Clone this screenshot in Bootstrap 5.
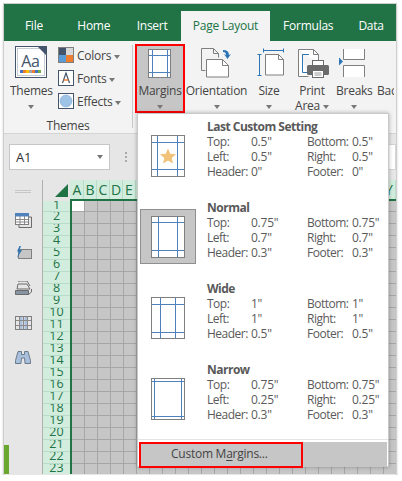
<!DOCTYPE html>
<html lang="en">
<head>
<meta charset="utf-8">
<title>Page Layout - Margins</title>
<link href="https://cdn.jsdelivr.net/npm/bootstrap@5.3.0/dist/css/bootstrap.min.css" rel="stylesheet">
<style>
html,body{background:#fff;margin:0;padding:0;overflow:hidden}
body,.xl-win{font-family:"Open Sans","Noto Sans",sans-serif;font-size:12px;line-height:16px;color:#444}
.xl-win{width:394px;height:472px;margin:3px 0 0 3px;border:1px solid #cfcfcf;border-bottom:0;position:relative;overflow:hidden;background:#e6e6e6;box-shadow:0 2px 2px #ccc;letter-spacing:-.25px}
.xl-fix{flex:none}
.xl-tabs{height:37px;background:#217346}
.xl-tab{color:#fff;font-size:12px;text-align:center;padding-top:14px}
.xl-tab.on{background:#f3f3f3;color:#217346;margin-top:7px;padding-top:7px}
.xl-ribbon{height:93px;background:#f3f3f3;border-bottom:1px solid #d4d4d4}
.xl-group{width:128px;flex:none}
.xl-sep{width:1px;height:83px;margin-top:4px;background:#c9c9c9;flex:none}
.xl-big{height:69px;margin-top:3px;border:2px solid transparent;text-align:center;flex:none;white-space:nowrap;line-height:15px}
.xl-big svg{display:block;margin:0 0 1px}
.xl-big.hit{border-color:#f00;background:#c6c6c6}
.xl-small{height:23px;white-space:nowrap}
.xl-small svg{margin-right:3px;flex:none}
.xl-small span{margin-top:1px}
.xl-small span span{margin:0}
.xl-cr{display:inline-block;width:0;height:0;border:3.5px solid transparent;border-top:4px solid #777;border-bottom:0;vertical-align:middle}
.xl-glabel{text-align:center;margin-top:2px;color:#444}
.xl-fbar{height:46px;padding-top:10px}
.xl-name{width:101px;height:26px;background:#fff;border:1px solid #c6c6c6;padding:0 6px;font-size:13px;color:#333;margin-left:5px}
.xl-dots{width:32px;gap:2px;padding-top:8px}
.xl-dots i{display:block;width:2px;height:2px;background:#aaa}
.xl-input{height:26px;background:#fff;border:1px solid #d4d4d4}
.xl-sheet{height:294px}
.xl-side{width:39px;border-right:1px solid #b0b0b0;flex:none}
.xl-side svg{display:block;margin:0 auto}
.xl-status{width:5px;height:29px;background:#6aa72e;margin-top:auto}
.xl-corner{width:28px;height:21px;flex:none;padding:4px 3px 0 12px}
.xl-cols{height:21px;background:#d2ecdd;border-bottom:2px solid #217346;margin-left:-1px;overflow:hidden;padding-left:1px}
.xl-cols span{width:13px;flex:none;text-align:center;color:#217346;font-size:14px;line-height:19px;letter-spacing:0;border-right:1px solid #b9dcc8;overflow:hidden}
.xl-rows{width:29px;flex:none;background:#d2ecdd;border-right:2px solid #217346;overflow:hidden}
.xl-rows div{height:12px;line-height:8px;font-size:12.5px;letter-spacing:0;text-align:center;color:#217346;border-bottom:1px solid #b9dcc8;overflow:hidden}
.xl-rows div:first-child{height:11px}
.xl-grid{background-color:#c6c6c6;background-image:repeating-linear-gradient(90deg,transparent 0 12px,#a6a6a6 12px 13px),repeating-linear-gradient(180deg,transparent 0 11px,#a6a6a6 11px 12px);background-position:0 -1px}
.xl-a1{width:12px;height:10px;background:#fff}
.xl-menu{position:absolute;left:133px;top:109px;width:252px;height:354px;background:#fff;border:1px solid #c9c9c9;box-shadow:0 0 4px rgba(0,0,0,.3);color:#5a5a5a;line-height:15px;font-size:12px}
.xl-sec{height:81px}
.xl-thumb{width:56px;height:55px;margin:14px 0 0 2px;flex:none}
.xl-thumb.sel{background:#c6c6c6;border:1px solid #8f8f8f}
.xl-info{margin:5px 0 0 11px}
.xl-ttl{font-weight:700;color:#595959;letter-spacing:-.5px}
.xl-tbl{display:grid;grid-template-columns:44px 56px 45px auto;white-space:nowrap}
.xl-tbl span:nth-child(odd){letter-spacing:-.5px}
.xl-foot{border-top:1px solid #e4e4e4;margin:1px 0 0;padding:2px 1px 0;height:29px}
.xl-custom{background:#c6c6c6;height:25px}
.xl-hit2{width:164px;height:26px;border:2px solid #f00;padding:2px 0 0 30px;color:#444}
.xl-hit2 u{text-underline-offset:2px}
</style>
</head>
<body>
<div class="xl-win">
  <div class="xl-tabs d-flex">
    <div class="xl-tab" style="width:60px">File</div>
    <div class="xl-tab" style="width:60px">Home</div>
    <div class="xl-tab" style="width:57px">Insert</div>
    <div class="xl-tab on" style="width:90px">Page Layout</div>
    <div class="xl-tab" style="width:76px">Formulas</div>
    <div class="xl-tab" style="width:50px">Data</div>
  </div>

  <div class="xl-ribbon d-flex overflow-hidden">
    <div class="xl-group">
      <div class="d-flex">
        <div class="xl-big ms-1" style="width:46px">
          <svg width="42" height="36" viewBox="0 0 42 36">
            <rect x="5.500" y=".5" width="31" height="31" fill="#fff" stroke="#44546a"/>
            <rect x="7.500" y="2.500" width="27" height="27" fill="#fff" stroke="#c6ccd4"/>
            <path d="M28 1h8v8z" fill="#44546a"/>
            <text x="20.500" y="21" text-anchor="middle" font-family="Open Sans" font-size="16" fill="#44546a">Aa</text>
            <g><rect x="10" y="24" width="3" height="3" fill="#4472c4"/><rect x="13" y="24" width="3" height="3" fill="#ed7d31"/><rect x="16" y="24" width="3" height="3" fill="#ffc000"/><rect x="19" y="24" width="3" height="3" fill="#a5a5a5"/><rect x="22" y="24" width="3" height="3" fill="#ed7d31"/><rect x="25" y="24" width="3" height="3" fill="#4472c4"/><rect x="28" y="24" width="3" height="3" fill="#70ad47"/></g>
          </svg>
          <div>Themes</div>
          <div><span class="xl-cr"></span></div>
        </div>
        <div class="ms-1" style="margin-top:6px">
          <div class="xl-small d-flex align-items-start">
            <svg width="16" height="16" viewBox="0 0 16 16"><rect x="0" y="0" width="8" height="8" fill="#44546a"/><rect x="8" y="0" width="8" height="8" fill="#d9d9d9"/><rect x="0" y="8" width="8" height="8" fill="#5b9bd5"/><rect x="8" y="8" width="8" height="8" fill="#ed7d31"/><rect x=".5" y=".5" width="15" height="15" fill="none" stroke="#7f7f7f"/></svg>
            <span>Colors <span class="xl-cr"></span></span>
          </div>
          <div class="xl-small d-flex align-items-start">
            <svg width="16" height="16" viewBox="0 0 16 16"><rect x=".5" y=".5" width="15" height="15" fill="#fff" stroke="#44546a"/><path d="M4.500 13 8 3l3.500 10" fill="none" stroke="#44546a" stroke-width="1.2"/><path d="M5.500 10h5" stroke="#ed7d31" stroke-width="1.4"/></svg>
            <span>Fonts <span class="xl-cr"></span></span>
          </div>
          <div class="xl-small d-flex align-items-start">
            <svg width="16" height="16" viewBox="0 0 16 16"><rect x=".5" y=".5" width="15" height="15" fill="#fff" stroke="#44546a"/><circle cx="8" cy="8" r="6" fill="#9dc3e6" stroke="#7ba7d0" stroke-width=".6"/></svg>
            <span>Effects <span class="xl-cr"></span></span>
          </div>
        </div>
      </div>
      <div class="xl-glabel">Themes</div>
    </div>
    <div class="xl-sep"></div>

    <div class="xl-big hit" style="width:50px;margin-left:2px">
      <svg width="46" height="36" viewBox="0 0 46 36">
        <rect x="11.500" y="3.500" width="22" height="28" fill="#fff" stroke="#7f7f7f"/>
        <path d="M15.500 4v27M30.500 4v27M12 9.500h21M12 26.500h21" stroke="#4f81bd" fill="none"/>
      </svg>
      <div style="margin:0 -2px">Margins</div>
      <div><span class="xl-cr"></span></div>
    </div>
    <div class="xl-big" style="width:63px">
      <svg width="59" height="36" viewBox="0 0 59 36">
        <path d="M14.500 2.500h12l5 5v4M14.500 2.500V24.500h4" fill="none" stroke="#7f7f7f"/>
        <path d="M19.500 13.500h16l6 6v11.500h-22z" fill="#fff" stroke="#7f7f7f"/>
        <path d="M35.500 13.500v6h6" fill="none" stroke="#7f7f7f"/>
        <path d="M26.500 2.500v5h5" fill="none" stroke="#7f7f7f"/>
        <path d="M36 4q6 0 6 5l2-1-3.500 5-3.500-5 2 1q0-3-3-3z" fill="#2e75b6"/>
      </svg>
      <div style="margin:0 -3px">Orientation</div>
      <div><span class="xl-cr"></span></div>
    </div>
    <div class="xl-big" style="width:42px">
      <svg width="38" height="36" viewBox="0 0 38 36">
        <path d="M15.500 8.500h13l5 5v15.500h-18z" fill="#fff" stroke="#7f7f7f"/>
        <path d="M28.500 8.500v5h5" fill="none" stroke="#7f7f7f"/>
        <path d="M13.500 4.500h20M13.500 2.500v4M33.500 2.500v4M9.500 8.500v21M7.500 8.500h4M7.500 29.500h4" stroke="#2e75b6" fill="none"/>
      </svg>
      <div>Size</div>
      <div><span class="xl-cr"></span></div>
    </div>
    <div class="xl-big" style="width:44px">
      <svg width="40" height="36" viewBox="0 0 40 36">
        <path d="M6.500 3.500h15l5 5v9M6.500 3.500V30.500h10" fill="#fff" stroke="#7f7f7f"/>
        <path d="M21.500 3.500v5h5" fill="none" stroke="#7f7f7f"/>
        <path d="M17 8.500H10.500V26.500h6" fill="none" stroke="#2e75b6"/>
        <rect x="20.500" y="14.500" width="11" height="6" fill="#fff" stroke="#6b6b6b"/>
        <rect x="15" y="19" width="22" height="10" rx="1.500" fill="#6b6b6b"/>
        <rect x="20.500" y="24.500" width="11" height="7" fill="#fff" stroke="#6b6b6b"/>
        <path d="M22.500 27h7M22.500 29h7" stroke="#9a9a9a"/>
      </svg>
      <div>Print</div>
      <div>Area <span class="xl-cr"></span></div>
    </div>
    <div class="xl-big" style="width:40px">
      <svg width="36" height="36" viewBox="0 0 36 36">
        <path d="M7.500 3v10.500h21V3" fill="#fff" stroke="#7f7f7f"/>
        <path d="M7.500 31v-11.500h21V31" fill="#fff" stroke="#7f7f7f"/>
        <path d="M3 11.500l4 4-4 4z" fill="#2e75b6"/>
      </svg>
      <div>Breaks</div>
      <div><span class="xl-cr"></span></div>
    </div>
    <div class="xl-big flex-grow-1 overflow-hidden text-start" style="flex:1 1 0;padding-left:1px">
      <svg width="20" height="36" viewBox="0 0 20 36"><path d="M18 3v26" stroke="#8a8a8a" stroke-width="2"/></svg>
      <div>Background</div>
    </div>
  </div>

  <div class="xl-fbar d-flex">
    <div class="xl-name d-flex align-items-center justify-content-between">
      <span>A1</span><span class="xl-cr"></span>
    </div>
    <div class="xl-dots d-flex flex-column align-items-center"><i></i><i></i><i></i></div>
    <div class="xl-input flex-grow-1"></div>
  </div>

  <div class="xl-sheet d-flex">
    <div class="xl-side d-flex flex-column">
      <svg width="16" height="3" viewBox="0 0 16 3" style="margin-top:10px"><path d="M0 .5h16M0 2.500h16" stroke="#c6c6c6"/></svg>
      <svg width="17" height="15" viewBox="0 0 17 15" style="margin-top:20px">
        <rect x=".5" y=".5" width="13" height="11" fill="#fff" stroke="#7f7f7f"/><rect x="0" y="0" width="14" height="3.500" fill="#4f81bd"/><path d="M5 3v8M9.500 3v8M1 6.500h12M1 9h12" stroke="#8a8a8a"/><path d="M14 4h2.500v10.500H4V12" fill="none" stroke="#6b6b6b"/>
      </svg>
      <svg width="18" height="14" viewBox="0 0 18 14" style="margin-top:18px">
        <rect x="4.500" y="3.500" width="13" height="9" fill="#c6c6c6" stroke="#7f7f7f"/><path d="M5.500 0 3 5.500h2L3 12l5-8H5.500L7 0z" fill="#2e75b6"/>
      </svg>
      <svg width="17" height="14" viewBox="0 0 17 14" style="margin-top:21px">
        <path d="M.5 9.500h13v4H.5z" fill="#8794a3" stroke="#6b6b6b"/><path d="M2 8l1-5h9l3 5z" fill="#e6e6e6" stroke="#6b6b6b"/><path d="M3.500 1l.5-1h8l3 5M13.500 13.500 16.500 11V8" fill="none" stroke="#6b6b6b"/>
      </svg>
      <svg width="17" height="14" viewBox="0 0 17 14" style="margin-top:21px">
        <rect x=".5" y=".5" width="16" height="13" fill="#e6e6e6" stroke="#7f7f7f"/><rect x="5" y="1" width="2.500" height="12" fill="#a9c0dc"/><rect x="9.500" y="1" width="2.500" height="12" fill="#a9c0dc"/><path d="M4.500 1v12M8.500 1v12M12.500 1v12M1 4.500h15M1 9.500h15" stroke="#8a8a8a"/>
      </svg>
      <svg width="16" height="13" viewBox="0 0 16 13" style="margin-top:21px">
        <path d="M3 .5h3.500v3h3v-3H13l2.500 9v3h-5.500L9.500 7h-3L6 12.500H.5v-3z" fill="#a9c0dc" stroke="#6b7b8c"/>
      </svg>
      <div class="xl-status"></div>
    </div>
    <div class="flex-grow-1 d-flex flex-column overflow-hidden">
      <div class="d-flex xl-fix">
        <div class="xl-corner">
          <svg width="13" height="13" viewBox="0 0 13 13" class="d-block"><path d="M13 0v13H0z" fill="#217346"/></svg>
        </div>
        <div class="xl-cols d-flex flex-grow-1">
          <span>A</span><span>B</span><span>C</span><span>D</span><span>E</span><span>F</span><span>G</span><span>H</span><span>I</span><span>J</span><span>K</span><span>L</span><span>M</span><span>N</span><span>O</span><span>P</span><span>Q</span><span>R</span><span>S</span><span>T</span><span>U</span><span>V</span><span>W</span><span>X</span><span>Y</span><span>Z</span>
        </div>
      </div>
      <div class="d-flex flex-grow-1 overflow-hidden">
        <div class="xl-rows">
          <div>1</div><div>2</div><div>3</div><div>4</div><div>5</div><div>6</div><div>7</div><div>8</div><div>9</div><div>10</div><div>11</div><div>12</div><div>13</div><div>14</div><div>15</div><div>16</div><div>17</div><div>18</div><div>19</div><div>20</div><div>21</div><div>22</div><div>23</div>
        </div>
        <div class="xl-grid flex-grow-1"><div class="xl-a1"></div></div>
      </div>
    </div>
  </div>

  <div class="xl-menu">
    <div class="xl-sec d-flex">
      <div class="xl-thumb d-flex align-items-center justify-content-center">
        <svg width="34" height="42" viewBox="0 0 34 42"><rect x=".5" y=".5" width="33" height="41" fill="#fff" stroke="#7f7f7f"/><path d="M6.500 1v40M26.500 1v40M1 7.500h32M1 34.500h32" stroke="#4f81bd" fill="none"/><path d="M17 13.500l2.300 5.300 5.700.5-4.300 3.700 1.300 5.500-5-3-5 3 1.300-5.500L9 19.300l5.700-.5z" fill="#f0c27a"/></svg>
      </div>
      <div class="xl-info">
        <div class="xl-ttl">Last Custom Setting</div>
        <div class="xl-tbl"><span>Top:</span><span>0.5"</span><span>Bottom:</span><span>0.5"</span><span>Left:</span><span>0.5"</span><span>Right:</span><span>0.5"</span><span>Header:</span><span>0"</span><span>Footer:</span><span>0"</span></div>
      </div>
    </div>
    <div class="xl-sec d-flex">
      <div class="xl-thumb sel d-flex align-items-center justify-content-center">
        <svg width="34" height="42" viewBox="0 0 34 42"><rect x=".5" y=".5" width="33" height="41" fill="#fff" stroke="#7f7f7f"/><path d="M7.500 1v40M26.500 1v40M1 6.500h32M1 34.500h32" stroke="#4f81bd" fill="none"/></svg>
      </div>
      <div class="xl-info">
        <div class="xl-ttl">Normal</div>
        <div class="xl-tbl"><span>Top:</span><span>0.75"</span><span>Bottom:</span><span>0.75"</span><span>Left:</span><span>0.7"</span><span>Right:</span><span>0.7"</span><span>Header:</span><span>0.3"</span><span>Footer:</span><span>0.3"</span></div>
      </div>
    </div>
    <div class="xl-sec d-flex">
      <div class="xl-thumb d-flex align-items-center justify-content-center">
        <svg width="34" height="42" viewBox="0 0 34 42"><rect x=".5" y=".5" width="33" height="41" fill="#fff" stroke="#7f7f7f"/><path d="M9.500 1v40M24.500 1v40M1 7.500h32M1 35.500h32" stroke="#4f81bd" fill="none"/></svg>
      </div>
      <div class="xl-info">
        <div class="xl-ttl">Wide</div>
        <div class="xl-tbl"><span>Top:</span><span>1"</span><span>Bottom:</span><span>1"</span><span>Left:</span><span>1"</span><span>Right:</span><span>1"</span><span>Header:</span><span>0.5"</span><span>Footer:</span><span>0.5"</span></div>
      </div>
    </div>
    <div class="xl-sec d-flex">
      <div class="xl-thumb d-flex align-items-center justify-content-center">
        <svg width="34" height="42" viewBox="0 0 34 42"><rect x=".5" y=".5" width="33" height="41" fill="#fff" stroke="#7f7f7f"/><path d="M3.500 1v40M30.500 1v40M1 3.500h32M1 38.500h32" stroke="#4f81bd" fill="none"/></svg>
      </div>
      <div class="xl-info">
        <div class="xl-ttl">Narrow</div>
        <div class="xl-tbl"><span>Top:</span><span>0.75"</span><span>Bottom:</span><span>0.75"</span><span>Left:</span><span>0.25"</span><span>Right:</span><span>0.25"</span><span>Header:</span><span>0.3"</span><span>Footer:</span><span>0.3"</span></div>
      </div>
    </div>
    <div class="xl-foot">
      <div class="xl-custom"><div class="xl-hit2">Custom M<u>a</u>rgins...</div></div>
    </div>
  </div>
</div>
<script src="https://cdn.jsdelivr.net/npm/bootstrap@5.3.0/dist/js/bootstrap.bundle.min.js"></script>
</body>
</html>
